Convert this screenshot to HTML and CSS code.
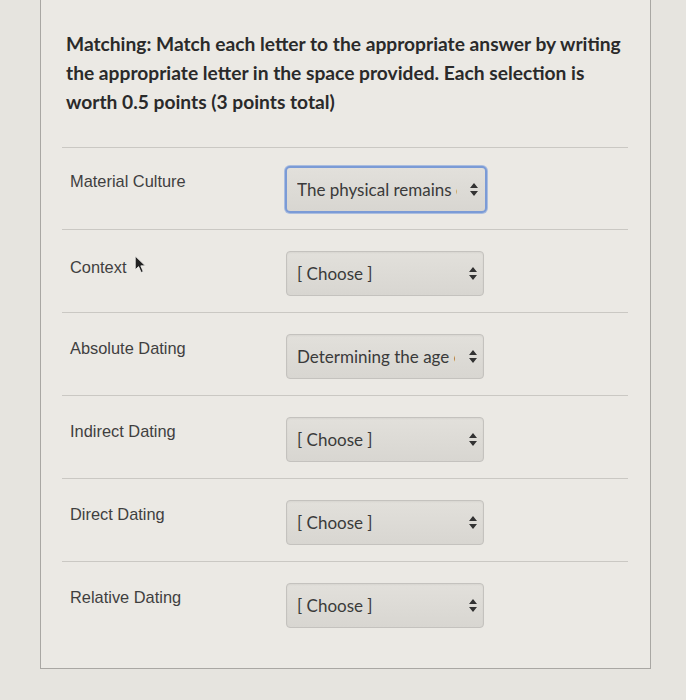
FILE: index.html
```html
<!DOCTYPE html>
<html lang="en">
<head>
    <meta charset="UTF-8">
    <meta name="viewport" content="width=device-width, initial-scale=1.0">
    <title>Matching Question</title>
    <link rel="stylesheet" href="styles.css">
</head>
<body>
    <div class="question">
        <p class="question-text">Matching: Match each letter to the appropriate answer by writing the appropriate letter in the space provided. Each selection is worth 0.5 points (3 points total)</p>

        <div class="answers">
            <div class="answer-row">
                <label class="term" for="q1">Material Culture</label>
                <select id="q1" class="choice focused">
                    <option>The physical remains of past human activity</option>
                </select>
            </div>
            <div class="answer-row">
                <label class="term" for="q2">Context<svg class="pointer" viewBox="0 0 12 18" width="13" height="19"><path d="M1 1 L1 14 L4.2 11 L6.6 16.6 L8.6 15.7 L6.3 10.3 L10.6 10.3 Z" fill="#222" stroke="#f4f3ef" stroke-width="0.8" stroke-linejoin="round"/></svg></label>
                <select id="q2" class="choice">
                    <option>[ Choose ]</option>
                </select>
            </div>
            <div class="answer-row">
                <label class="term" for="q3">Absolute Dating</label>
                <select id="q3" class="choice">
                    <option>Determining the age of a site or artifact</option>
                </select>
            </div>
            <div class="answer-row">
                <label class="term" for="q4">Indirect Dating</label>
                <select id="q4" class="choice">
                    <option>[ Choose ]</option>
                </select>
            </div>
            <div class="answer-row">
                <label class="term" for="q5">Direct Dating</label>
                <select id="q5" class="choice">
                    <option>[ Choose ]</option>
                </select>
            </div>
            <div class="answer-row">
                <label class="term" for="q6">Relative Dating</label>
                <select id="q6" class="choice">
                    <option>[ Choose ]</option>
                </select>
            </div>
        </div>
    </div>
</body>
</html>
```

FILE: styles.css
```css
body {
    margin: 0;
    background-color: #e6e4df;
    font-family: "Liberation Sans", Arial, sans-serif;
    color: #444;
}

.question {
    width: 611px;
    min-height: 667px;
    margin-left: 40px;
    padding: 29px 22px 24px 21px;
    box-sizing: border-box;
    background-color: #ebe9e4;
    border: 1px solid #a9a7a3;
    border-top: none;
}

.question-text {
    margin: 0 0 31px 4px;
    font-family: Lato, "Liberation Sans", sans-serif;
    font-weight: bold;
    font-size: 19.2px;
    line-height: 29px;
    color: #2a2a2a;
}

.answer-row {
    display: grid;
    grid-template-columns: 216px 198px;
    align-items: start;
    padding: 21px 0 16px 8px;
    border-top: 1px solid #cac8c3;
}

.answer-row:first-child {
    padding-top: 19px;
}

.term {
    padding-top: 4px;
    font-size: 16.4px;
    line-height: 20px;
    color: #3f3f3f;
}

/* mouse cursor resting next to the label */
.pointer {
    vertical-align: -1px;
    margin-left: 7px;
}

.choice {
    appearance: none;
    -webkit-appearance: none;
    width: 198px;
    height: 45px;
    padding: 0 28px 0 10px;
    font-family: Lato, "Liberation Sans", sans-serif;
    font-size: 17px;
    color: #3a3a3a;
    border: 1px solid #c4c2be;
    border-radius: 4px;
    background-color: #dcdad5;
    background-image: url("data:image/svg+xml;utf8,<svg xmlns='http://www.w3.org/2000/svg' width='8' height='13' viewBox='0 0 8 13'><path d='M4 0 L8 5 L0 5 Z M4 13 L8 8 L0 8 Z' fill='%23333'/></svg>"),
        linear-gradient(#e2e0db, #d8d6d1);
    background-repeat: no-repeat;
    background-position: right 6px center, 0 0;
    box-shadow: inset 0 1px 2px rgba(0, 0, 0, 0.05);
}

.choice.focused {
    width: 202px;
    height: 47px;
    margin: -1px 0 0 -1px;
    border: 2px solid #7b9bd6;
    border-radius: 5px;
    background-position: right 7px center, 0 0;
    box-shadow: 0 0 0 1px #aabddf;
}
```
